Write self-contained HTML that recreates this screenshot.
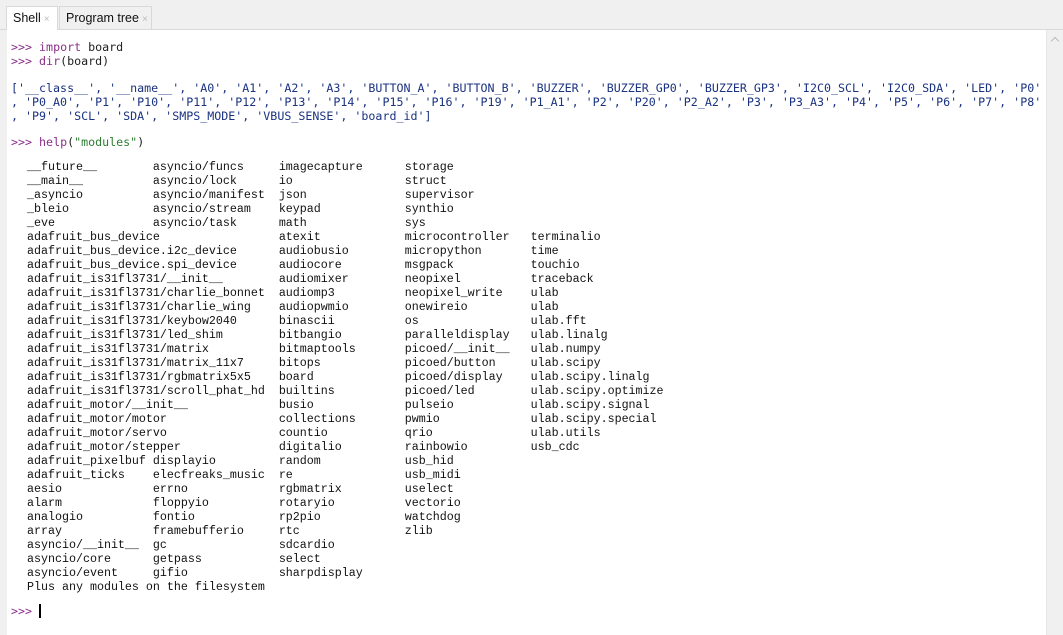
<!DOCTYPE html>
<html><head><meta charset="utf-8"><style>
body{margin:0;width:1063px;height:635px;background:#f0f0f0;position:relative;overflow:hidden;font-family:"Liberation Sans",sans-serif}
.tabs{position:absolute;left:0;top:0;width:1063px;height:29px;background:#f0f0f0;border-bottom:1px solid #d9d9d9}
.tab{position:absolute;top:6px;height:22px;font-size:12.5px;line-height:22px;color:#111;padding-left:6px;box-sizing:border-box}
.t1{left:6px;width:52px;background:#fff;border:1px solid #d9d9d9;border-bottom:none;height:24px}
.t2{left:59px;width:93px;background:#f0f0f0;border:1px solid #d9d9d9;border-bottom:none;height:23px}
.x{color:#bbb;font-size:10px;margin-left:3px}
.main{position:absolute;left:7px;top:30px;width:1039px;height:605px;background:#fff}
.sb{position:absolute;left:1046px;top:30px;width:17px;height:605px;background:#f0f0f0;border-left:1px solid #e6e6e6}
.sb:after{content:"";position:absolute;left:5px;top:8px;width:5px;height:5px;border-left:1.5px solid #bbb;border-top:1.5px solid #bbb;transform:rotate(45deg)}
pre{position:absolute;margin:0;font-size:11.65px;line-height:14px;white-space:pre}
.c{font-family:"DejaVu Sans Mono","Liberation Mono",monospace;color:#222;left:11px}
.m{font-family:"Liberation Mono",monospace;color:#111;left:27px;font-size:11.67px}
.p{color:#8a2f8a}.k{color:#8a2f8a}.o{color:#1a3280}.s{color:#2e7d32}
.cur{display:inline-block;width:2px;height:14px;background:#000;vertical-align:-3px}
</style></head><body>
<div class="tabs"><div class="tab t1">Shell<span class="x">×</span></div><div class="tab t2">Program tree<span class="x">×</span></div></div>
<div class="main"></div><div class="sb"></div>
<pre class="c" style="top:40px"><span class="p">&gt;&gt;&gt;</span> <span class="k">import</span> board
<span class="p">&gt;&gt;&gt;</span> <span class="k">dir</span>(board)</pre>
<pre class="c o" style="top:81px">['__class__', '__name__', 'A0', 'A1', 'A2', 'A3', 'BUTTON_A', 'BUTTON_B', 'BUZZER', 'BUZZER_GP0', 'BUZZER_GP3', 'I2C0_SCL', 'I2C0_SDA', 'LED', 'P0'
, 'P0_A0', 'P1', 'P10', 'P11', 'P12', 'P13', 'P14', 'P15', 'P16', 'P19', 'P1_A1', 'P2', 'P20', 'P2_A2', 'P3', 'P3_A3', 'P4', 'P5', 'P6', 'P7', 'P8'
, 'P9', 'SCL', 'SDA', 'SMPS_MODE', 'VBUS_SENSE', 'board_id']</pre>
<pre class="c" style="top:135px"><span class="p">&gt;&gt;&gt;</span> <span class="k">help</span>(<span class="s">"modules"</span>)</pre>
<pre class="m" style="top:160px">__future__        asyncio/funcs     imagecapture      storage
__main__          asyncio/lock      io                struct
_asyncio          asyncio/manifest  json              supervisor
_bleio            asyncio/stream    keypad            synthio
_eve              asyncio/task      math              sys
adafruit_bus_device                 atexit            microcontroller   terminalio
adafruit_bus_device.i2c_device      audiobusio        micropython       time
adafruit_bus_device.spi_device      audiocore         msgpack           touchio
adafruit_is31fl3731/__init__        audiomixer        neopixel          traceback
adafruit_is31fl3731/charlie_bonnet  audiomp3          neopixel_write    ulab
adafruit_is31fl3731/charlie_wing    audiopwmio        onewireio         ulab
adafruit_is31fl3731/keybow2040      binascii          os                ulab.fft
adafruit_is31fl3731/led_shim        bitbangio         paralleldisplay   ulab.linalg
adafruit_is31fl3731/matrix          bitmaptools       picoed/__init__   ulab.numpy
adafruit_is31fl3731/matrix_11x7     bitops            picoed/button     ulab.scipy
adafruit_is31fl3731/rgbmatrix5x5    board             picoed/display    ulab.scipy.linalg
adafruit_is31fl3731/scroll_phat_hd  builtins          picoed/led        ulab.scipy.optimize
adafruit_motor/__init__             busio             pulseio           ulab.scipy.signal
adafruit_motor/motor                collections       pwmio             ulab.scipy.special
adafruit_motor/servo                countio           qrio              ulab.utils
adafruit_motor/stepper              digitalio         rainbowio         usb_cdc
adafruit_pixelbuf displayio         random            usb_hid
adafruit_ticks    elecfreaks_music  re                usb_midi
aesio             errno             rgbmatrix         uselect
alarm             floppyio          rotaryio          vectorio
analogio          fontio            rp2pio            watchdog
array             framebufferio     rtc               zlib
asyncio/__init__  gc                sdcardio
asyncio/core      getpass           select
asyncio/event     gifio             sharpdisplay
Plus any modules on the filesystem</pre>
<pre class="c" style="top:604px"><span class="p">&gt;&gt;&gt;</span> <span class="cur"></span></pre>
</body></html>
